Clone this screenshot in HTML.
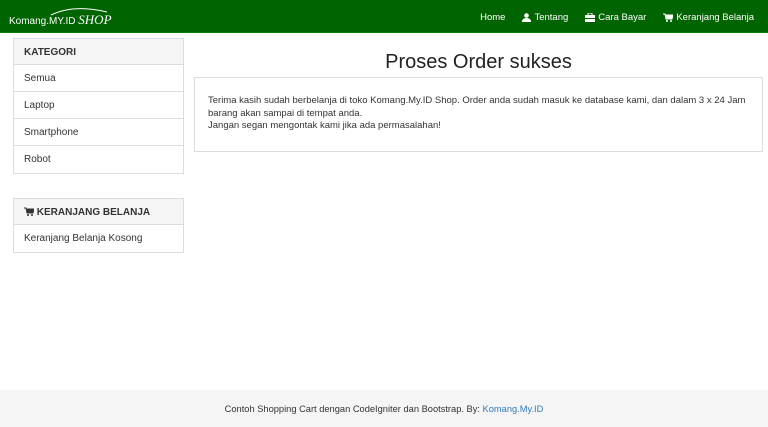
<!DOCTYPE html>
<html><head><meta charset="utf-8"><style>
*{box-sizing:border-box}
body{margin:0;width:768px;height:427px;font-family:"Liberation Sans",sans-serif;font-size:10px;color:#333;background:#fff;position:relative;overflow:hidden}
.nav{position:absolute;top:0;left:0;width:768px;height:33px;background:#006400;border-bottom:1px solid #0a7a0a}
.logo{position:absolute;left:9px;top:12px;color:#fff;font-size:10px}
.links{position:absolute;right:14px;top:12px;color:#fff;font-size:9.5px;display:flex;gap:0}
.links span{margin-left:17px;display:flex;align-items:center}
.links svg{margin-right:3px}
.panel{position:absolute;left:13px;width:171px;border:1px solid #ddd;background:#fff}
.ph{height:26px;background:#f5f5f5;border-bottom:1px solid #ddd;font-weight:bold;padding:8px 10px;font-size:10px}
.item{height:27px;border-bottom:1px solid #ddd;padding:8px 10px}
.item:last-child{border-bottom:none}
h1{position:absolute;left:194px;width:569px;top:51px;margin:0;text-align:center;font-weight:normal;font-size:20px;color:#222}
.box{position:absolute;left:194px;top:77px;width:569px;height:75px;border:1px solid #ddd;padding:17px 13px;line-height:12.5px;font-size:9.5px}
.foot{position:absolute;left:0;top:390px;width:768px;height:37px;background:#f5f5f5;text-align:center;padding-top:14px;font-size:9.3px}
.foot a{color:#337ab7;text-decoration:none}
</style></head><body>
<div class="nav">
<div class="logo">Komang.MY.ID <span style="font-family:'Liberation Serif',serif;font-style:italic;font-size:13px">SHOP</span>
<svg style="position:absolute;left:40px;top:-6px" width="60" height="10"><path d="M2 9 Q25 -2 58 6" stroke="#fff" fill="none" stroke-width="1"/></svg></div>
<div class="links">
<span>Home</span>
<span><svg width="9" height="9"><circle cx="4.5" cy="2.5" r="2.3" fill="#fff"/><path d="M0 9 Q0 5 4.5 5 Q9 5 9 9Z" fill="#fff"/></svg>Tentang</span>
<span><svg width="10" height="9"><rect x="0" y="2" width="10" height="7" fill="#fff"/><rect x="3" y="0" width="4" height="3" fill="none" stroke="#fff"/><rect x="0" y="5" width="10" height="1" fill="#006400"/></svg>Cara Bayar</span>
<span><svg width="10" height="9"><path d="M0 1H2L3 6H9L10 2H2.5" fill="#fff" stroke="#fff"/><circle cx="4" cy="8" r="1" fill="#fff"/><circle cx="8" cy="8" r="1" fill="#fff"/></svg>Keranjang Belanja</span>
</div></div>
<div class="panel" style="top:38px"><div class="ph">KATEGORI</div><div class="item">Semua</div><div class="item">Laptop</div><div class="item">Smartphone</div><div class="item">Robot</div></div>
<div class="panel" style="top:198px"><div class="ph"><svg width="10" height="9" style="vertical-align:-1px"><path d="M0 1H2L3 6H9L10 2H2.5" fill="#333" stroke="#333"/><circle cx="4" cy="8" r="1" fill="#333"/><circle cx="8" cy="8" r="1" fill="#333"/></svg> KERANJANG BELANJA</div><div class="item">Keranjang Belanja Kosong</div></div>
<h1>Proses Order sukses</h1>
<div class="box">Terima kasih sudah berbelanja di toko Komang.My.ID Shop. Order anda sudah masuk ke database kami, dan dalam 3 x 24 Jam barang akan sampai di tempat anda.<br>Jangan segan mengontak kami jika ada permasalahan!</div>
<div class="foot">Contoh Shopping Cart dengan CodeIgniter dan Bootstrap. By: <a>Komang.My.ID</a></div>
</body></html>
